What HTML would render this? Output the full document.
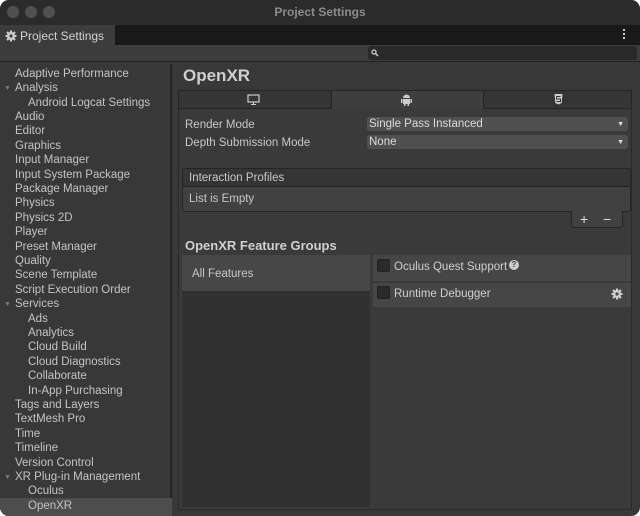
<!DOCTYPE html>
<html><head><style>
*{margin:0;padding:0;box-sizing:border-box}
body{width:640px;height:516px;background:#fff;font-family:"Liberation Sans",sans-serif;font-size:11.5px;color:#c8c8c8;overflow:hidden}
.win{position:absolute;left:0;top:0;width:640px;height:516px;background:#383838;border-radius:9px;overflow:hidden}
.title{position:absolute;left:0;top:0;width:640px;height:25px;background:#2b2b2b;text-align:center;line-height:25px;color:#8c8c8c;font-weight:bold;font-size:12px}
.dot{position:absolute;top:6px;width:12px;height:12px;border-radius:6px;background:#505050}
.tabbar{position:absolute;left:0;top:25px;width:640px;height:20px;background:#191919}
.tab{position:absolute;left:0;top:0;width:115px;height:20px;background:#3c3c3c;line-height:23px;padding-left:20px;font-size:12px;color:#d2d2d2}
.tool{position:absolute;left:0;top:45px;width:640px;height:17px;background:#3c3c3c;border-bottom:1px solid #232323}
.search{position:absolute;left:368px;top:1px;width:269px;height:14px;background:#2a2a2a;border-radius:3px}
.left{position:absolute;left:0;top:64px;width:172px;height:452px;background:#383838;border-right:2px solid #242424}
.it{position:absolute;left:15px;height:14px;line-height:14px;white-space:nowrap;color:#c4c4c4}
.sub{left:28px}
.arr{position:absolute;left:4px;font-size:7px;color:#777}
.sel{position:absolute;left:0;top:434px;width:172px;height:18px;background:#4d4d4d}
.abs{position:absolute}
</style></head><body>
<div class="win">
<div class="title">Project Settings</div>
<div class="dot" style="left:7px"></div><div class="dot" style="left:25px"></div><div class="dot" style="left:43px"></div>
<div class="tabbar"><div class="tab">Project Settings</div>
<svg class="abs" style="left:5px;top:5px" width="12" height="12" viewBox="0 0 12 12"><circle cx="6" cy="6" r="4" fill="#cfcfcf"/><g stroke="#cfcfcf" stroke-width="2"><line x1="6" y1="0.5" x2="6" y2="11.5"/><line x1="0.5" y1="6" x2="11.5" y2="6"/><line x1="2" y1="2" x2="10" y2="10"/><line x1="10" y1="2" x2="2" y2="10"/></g><circle cx="6" cy="6" r="1.6" fill="#3c3c3c"/></svg>
<div class="abs" style="left:623px;top:4px;width:2px;height:2px;background:#ccc;box-shadow:0 4px #ccc,0 8px #ccc"></div></div>
<div class="tool"><div class="search"><svg class="abs" style="left:3px;top:3px" width="8" height="8"><circle cx="3" cy="3" r="2" stroke="#ccc" fill="none" stroke-width="1.3"/><line x1="4.5" y1="4.5" x2="7" y2="7" stroke="#ccc" stroke-width="1.5"/></svg></div></div>
<div class="left">
<div class="sel"></div>
<div class="it" style="top:3px">Adaptive Performance</div>
<div class="arr" style="top:21px">▼</div><div class="it" style="top:17px">Analysis</div>
<div class="it sub" style="top:32px">Android Logcat Settings</div>
<div class="it" style="top:46px">Audio</div>
<div class="it" style="top:60px">Editor</div>
<div class="it" style="top:75px">Graphics</div>
<div class="it" style="top:89px">Input Manager</div>
<div class="it" style="top:104px">Input System Package</div>
<div class="it" style="top:118px">Package Manager</div>
<div class="it" style="top:132px">Physics</div>
<div class="it" style="top:147px">Physics 2D</div>
<div class="it" style="top:161px">Player</div>
<div class="it" style="top:176px">Preset Manager</div>
<div class="it" style="top:190px">Quality</div>
<div class="it" style="top:204px">Scene Template</div>
<div class="it" style="top:219px">Script Execution Order</div>
<div class="arr" style="top:237px">▼</div><div class="it" style="top:233px">Services</div>
<div class="it sub" style="top:248px">Ads</div>
<div class="it sub" style="top:262px">Analytics</div>
<div class="it sub" style="top:276px">Cloud Build</div>
<div class="it sub" style="top:291px">Cloud Diagnostics</div>
<div class="it sub" style="top:305px">Collaborate</div>
<div class="it sub" style="top:320px">In-App Purchasing</div>
<div class="it" style="top:334px">Tags and Layers</div>
<div class="it" style="top:348px">TextMesh Pro</div>
<div class="it" style="top:363px">Time</div>
<div class="it" style="top:377px">Timeline</div>
<div class="it" style="top:392px">Version Control</div>
<div class="arr" style="top:410px">▼</div><div class="it" style="top:406px">XR Plug-in Management</div>
<div class="it sub" style="top:420px">Oculus</div>
<div class="it sub" style="top:434px;line-height:16px;height:16px">OpenXR</div>
</div>
<div class="abs" style="left:183px;top:66px;font-size:17px;font-weight:bold;color:#d0d0d0">OpenXR</div>
<div class="abs" style="left:178px;top:90px;width:454px;height:420px;border:1px solid #2a2a2a;background:#3a3a3a"></div>
<div class="abs" style="left:178px;top:90px;width:154px;height:19px;background:#353535;border:1px solid #242424"></div>
<div class="abs" style="left:332px;top:90px;width:151px;height:19px;background:#3e3e3e;border-top:1px solid #242424"></div>
<div class="abs" style="left:483px;top:90px;width:149px;height:19px;background:#353535;border:1px solid #242424"></div>
<svg class="abs" style="left:247px;top:94px" width="13" height="11"><rect x="1" y="1" width="11" height="7" fill="none" stroke="#ccc" stroke-width="1.2"/><line x1="6.5" y1="8" x2="6.5" y2="10" stroke="#ccc"/><line x1="4" y1="10.5" x2="9" y2="10.5" stroke="#ccc"/></svg>
<svg class="abs" style="left:401px;top:94px" width="11" height="12"><path d="M2 4 A3.5 3.5 0 0 1 9 4Z" fill="#ccc"/><rect x="2" y="5" width="7" height="5" fill="#ccc"/><rect x="0" y="5" width="1.5" height="4" fill="#ccc"/><rect x="9.5" y="5" width="1.5" height="4" fill="#ccc"/><rect x="3" y="10" width="1.5" height="2" fill="#ccc"/><rect x="6.5" y="10" width="1.5" height="2" fill="#ccc"/></svg>
<svg class="abs" style="left:554px;top:93px" width="9" height="12"><path d="M0.5 1h8l-0.8 9-3.2 1.5-3.2-1.5z" fill="#ccc"/><path d="M2.5 3.5h4M2.5 3.5v2.5h4v2.5h-4" stroke="#353535" fill="none"/></svg>
<div class="abs" style="left:185px;top:119px">Render Mode</div>
<div class="abs" style="left:185px;top:137px">Depth Submission Mode</div>
<div class="abs" style="left:367px;top:117px;width:261px;height:14px;background:#505050;border-radius:3px;padding-left:2px;line-height:15px;color:#dcdcdc">Single Pass Instanced<span style="position:absolute;right:4px;font-size:7px">▼</span></div>
<div class="abs" style="left:367px;top:135px;width:261px;height:14px;background:#505050;border-radius:3px;padding-left:2px;line-height:15px;color:#dcdcdc">None<span style="position:absolute;right:4px;font-size:7px">▼</span></div>
<div class="abs" style="left:182px;top:168px;width:449px;height:44px;border:1px solid #242424;border-radius:3px;background:#414141;overflow:hidden"><div style="height:18px;background:#353535;border-bottom:1px solid #242424;padding-left:6px;line-height:19px">Interaction Profiles</div><div style="padding-left:6px;line-height:25px">List is Empty</div></div>
<div class="abs" style="left:571px;top:211px;width:52px;height:17px;background:#414141;border:1px solid #242424;border-top:none;border-radius:0 0 3px 3px;color:#ddd;font-size:14px;line-height:17px"><span style="position:absolute;left:8px">+</span><span style="position:absolute;left:31px">−</span></div>
<div class="abs" style="left:185px;top:238px;font-size:13px;font-weight:bold;color:#d0d0d0">OpenXR Feature Groups</div>
<div class="abs" style="left:182px;top:255px;width:188px;height:252px;background:#313131"></div>
<div class="abs" style="left:182px;top:255px;width:188px;height:36px;background:#474747;padding-left:10px;line-height:38px">All Features</div>
<div class="abs" style="left:373px;top:255px;width:258px;height:26px;background:#464646"></div>
<div class="abs" style="left:373px;top:283px;width:258px;height:24px;background:#464646"></div>
<div class="abs" style="left:377px;top:259px;width:13px;height:13px;background:#2a2a2a;border:1px solid #222;border-radius:2px"></div>
<div class="abs" style="left:377px;top:286px;width:13px;height:13px;background:#2a2a2a;border:1px solid #222;border-radius:2px"></div>
<div class="abs" style="left:394px;top:261px;color:#cfcfcf">Oculus Quest Support</div>
<div class="abs" style="left:509px;top:260px;width:10px;height:10px;border-radius:5px;background:#ccc;color:#464646;font-size:8px;font-weight:bold;text-align:center;line-height:10px">?</div>
<div class="abs" style="left:394px;top:288px;color:#cfcfcf">Runtime Debugger</div>
<svg class="abs" style="left:611px;top:288px" width="12" height="12" viewBox="0 0 12 12"><circle cx="6" cy="6" r="4" fill="#cfcfcf"/><g stroke="#cfcfcf" stroke-width="2"><line x1="6" y1="0.5" x2="6" y2="11.5"/><line x1="0.5" y1="6" x2="11.5" y2="6"/><line x1="2" y1="2" x2="10" y2="10"/><line x1="10" y1="2" x2="2" y2="10"/></g><circle cx="6" cy="6" r="1.6" fill="#464646"/></svg>
</div>
</body></html>
